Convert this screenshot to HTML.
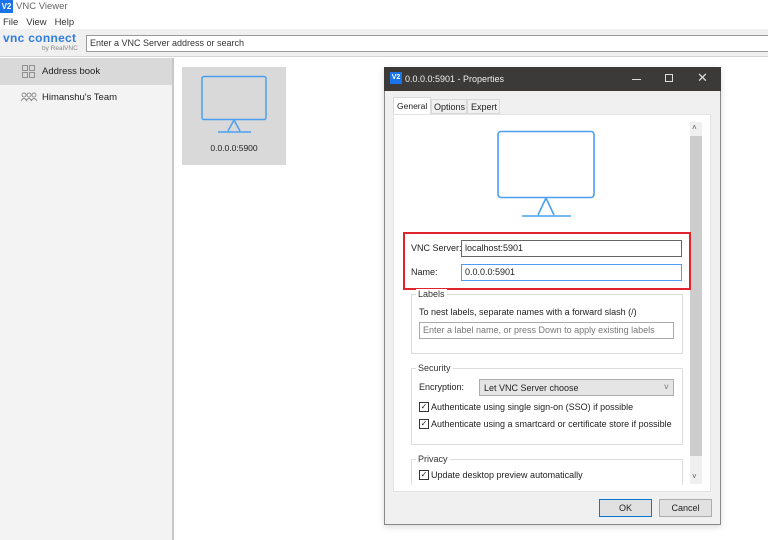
<!DOCTYPE html>
<html><head><style>
*{margin:0;padding:0;box-sizing:border-box}
body{width:768px;height:540px;overflow:hidden;background:#fff;font-family:"Liberation Sans",sans-serif;font-size:9px;color:#222;position:relative}
.a{position:absolute}
.inp{position:absolute;background:#fff;border:1px solid #7a7a7a;padding:2px 3px;font-size:9px;line-height:11px}
.gb{position:absolute;border:1px solid #dcdcdc}
.gb span{position:absolute;top:-6px;left:4px;background:#fff;padding:0 2px;color:#333}
.cb{position:absolute;width:10px;height:10px;border:1px solid #333;background:#fff;font-size:8px;line-height:8px;text-align:center}
</style></head><body>
<div class="a" style="left:0;top:0;width:13px;height:13px;background:#1a73e8;color:#fff;font-size:8px;line-height:13px;text-align:center;font-weight:bold">V2</div>
<div class="a" style="left:16px;top:1px;color:#666;font-size:9.5px">VNC Viewer</div>
<div class="a" style="left:3px;top:17px;font-size:9.5px;color:#333">File&nbsp;&nbsp;&nbsp;View&nbsp;&nbsp;&nbsp;Help</div>
<div class="a" style="left:0;top:29px;width:768px;height:28px;background:#f0f0f0;border-bottom:1px solid #d4d4d4"></div>
<div class="a" style="left:3px;top:31px;color:#2f7de1;font-size:12px;font-weight:bold;letter-spacing:0.3px">vnc connect</div>
<div class="a" style="left:42px;top:45px;color:#888;font-size:6.5px">by RealVNC</div>
<div class="inp" style="left:86px;top:35px;width:690px;height:17px;color:#333;border-color:#999">Enter a VNC Server address or search</div>
<div class="a" style="left:0;top:58px;width:172px;height:482px;background:#f3f3f3"></div>
<div class="a" style="left:0;top:58px;width:172px;height:27px;background:#d9d9d9"></div>
<div class="a" style="left:172px;top:58px;width:2px;height:482px;background:#c8c8c8"></div>
<svg class="a" style="left:22px;top:65px" width="13" height="13"><g fill="none" stroke="#888" stroke-width="0.9"><rect x="0.5" y="0.5" width="5" height="5"/><rect x="7.5" y="0.5" width="5" height="5"/><rect x="0.5" y="7.5" width="5" height="5"/><rect x="7.5" y="7.5" width="5" height="5"/></g></svg>
<div class="a" style="left:42px;top:66px;font-size:9.5px">Address book</div>
<svg class="a" style="left:20px;top:92px" width="18" height="10"><g fill="none" stroke="#888" stroke-width="0.9"><circle cx="4" cy="3" r="2"/><circle cx="9" cy="3" r="2"/><circle cx="14" cy="3" r="2"/><path d="M1 9 Q4 4 7 9 M6 9 Q9 4 12 9 M11 9 Q14 4 17 9"/></g></svg>
<div class="a" style="left:42px;top:92px;font-size:9.5px">Himanshu's Team</div>
<div class="a" style="left:182px;top:67px;width:104px;height:98px;background:#d9d9d9"></div>
<svg class="a" style="left:200px;top:75px" width="70" height="60"><g fill="none" stroke="#4a9ff0" stroke-width="1.5"><rect x="2" y="1.5" width="64" height="43" rx="2"/><path d="M34 45 L28 56 M34 45 L40 56 M18 57 H51"/></g></svg>
<div class="a" style="left:182px;top:143px;width:104px;text-align:center;font-size:8.5px">0.0.0.0:5900</div>
<!-- dialog -->
<div class="a" style="left:384px;top:67px;width:337px;height:458px;background:#f0f0f0;border:1px solid #888;box-shadow:0 2px 6px rgba(0,0,0,0.15)"></div>
<div class="a" style="left:384px;top:67px;width:337px;height:24px;background:#3b3a39"></div>
<div class="a" style="left:390px;top:72px;width:12px;height:12px;background:#1a73e8;color:#fff;font-size:7px;line-height:12px;text-align:center;font-weight:bold">V2</div>
<div class="a" style="left:405px;top:74px;color:#eee;font-size:9px">0.0.0.0:5901 - Properties</div>
<div class="a" style="left:632px;top:79px;width:9px;height:1px;background:#ddd"></div>
<div class="a" style="left:665px;top:74px;width:8px;height:8px;border:1px solid #ddd"></div>
<div class="a" style="left:697px;top:70px;color:#ddd;font-size:13px">✕</div>
<div class="a" style="left:393px;top:97px;width:38px;height:17px;background:#fff;border:1px solid #d9d9d9;border-bottom:none;padding:3px 0 0 3px;font-size:8.5px">General</div>
<div class="a" style="left:431px;top:99px;width:36px;height:15px;border:1px solid #d9d9d9;padding:2px 0 0 2px">Options</div>
<div class="a" style="left:467px;top:99px;width:33px;height:15px;border:1px solid #d9d9d9;padding:2px 0 0 3px">Expert</div>
<div class="a" style="left:393px;top:114px;width:318px;height:378px;background:#fff;border:1px solid #e3e3e3"></div>
<div class="a" style="left:690px;top:122px;width:12px;height:362px;background:#f0f0f0"></div>
<div class="a" style="left:690px;top:136px;width:12px;height:320px;background:#cdcdcd"></div>
<div class="a" style="left:692px;top:123px;font-size:8px;color:#555">˄</div>
<div class="a" style="left:692px;top:472px;font-size:8px;color:#555">˅</div>
<svg class="a" style="left:495px;top:129px" width="102" height="90"><g fill="none" stroke="#4a9ff0" stroke-width="1.6"><rect x="3" y="2.5" width="96" height="66" rx="3"/><path d="M51 69 L43 86 M51 69 L59 86 M27 87 H76"/></g></svg>
<div class="a" style="left:403px;top:232px;width:288px;height:58px;border:2px solid #e0242c"></div>
<div class="a" style="left:411px;top:243px">VNC Server:</div>
<div class="inp" style="left:461px;top:240px;width:221px;height:17px;border-color:#666">localhost:5901</div>
<div class="a" style="left:411px;top:267px">Name:</div>
<div class="inp" style="left:461px;top:264px;width:221px;height:17px;border-color:#4a9ff0">0.0.0.0:5901</div>
<div class="gb" style="left:411px;top:294px;width:272px;height:60px"><span>Labels</span></div>
<div class="a" style="left:419px;top:307px">To nest labels, separate names with a forward slash (/)</div>
<div class="inp" style="left:419px;top:322px;width:255px;height:17px;border-color:#aaa;color:#777">Enter a label name, or press Down to apply existing labels</div>
<div class="gb" style="left:411px;top:368px;width:272px;height:77px"><span>Security</span></div>
<div class="a" style="left:419px;top:382px">Encryption:</div>
<div class="a" style="left:479px;top:379px;width:195px;height:17px;background:#e5e5e5;border:1px solid #adadad;padding:3px 4px">Let VNC Server choose<span style="position:absolute;right:4px;top:2px;color:#777">˅</span></div>
<div class="cb" style="left:419px;top:402px">✓</div><div class="a" style="left:431px;top:402px">Authenticate using single sign-on (SSO) if possible</div>
<div class="cb" style="left:419px;top:419px">✓</div><div class="a" style="left:431px;top:419px">Authenticate using a smartcard or certificate store if possible</div>
<div class="gb" style="left:411px;top:459px;width:272px;height:26px;border-bottom:none"><span>Privacy</span></div>
<div class="cb" style="left:419px;top:470px">✓</div><div class="a" style="left:431px;top:470px">Update desktop preview automatically</div>
<div class="a" style="left:394px;top:485px;width:296px;height:6px;background:#fff"></div>
<div class="a" style="left:599px;top:499px;width:53px;height:18px;background:#e1e1e1;border:1px solid #0078d7;text-align:center;line-height:16px">OK</div>
<div class="a" style="left:659px;top:499px;width:53px;height:18px;background:#e1e1e1;border:1px solid #adadad;text-align:center;line-height:16px">Cancel</div>
</body></html>
